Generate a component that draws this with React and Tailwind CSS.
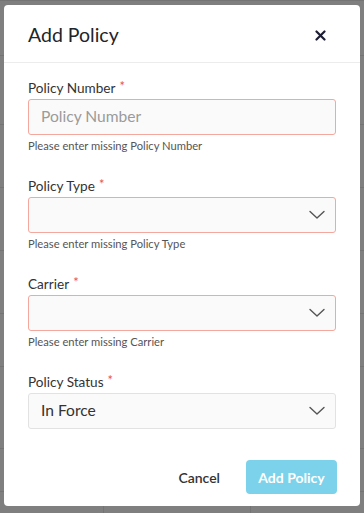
import React from 'react';

function Chevron() {
  return (
    <svg width="16" height="10" viewBox="0 0 16 10" fill="none" className="shrink-0">
      <path d="M1 1.5 L8 8 L15 1.5" stroke="#555" strokeWidth="1.4" strokeLinecap="round" strokeLinejoin="round" />
    </svg>
  );
}

function Label({ children }) {
  return (
    <div className="h-[20px] flex items-center text-[13.6px] text-[#333]">
      {children}
      <span className="text-[#e8574a] ml-[4px] text-[13px] -mt-[3px]">*</span>
    </div>
  );
}

function Field({ label, error, select, value, placeholder }) {
  const border = error ? 'border-[#f4a79d]' : 'border-[#e2e2e2]';
  return (
    <div>
      <Label>{label}</Label>
      <div className={`mt-[1px] h-[36px] rounded-[3px] border ${border} bg-[#fafafa] flex items-center justify-between pl-[12px] pr-[10px]`}>
        {value ? (
          <span className="text-[15.6px] text-[#333]">{value}</span>
        ) : (
          <span className="text-[15.6px] text-[#9b9b9b]">{placeholder}</span>
        )}
        {select && <Chevron />}
      </div>
      {error && <div className="mt-[3px] h-[16px] flex items-center text-[11.2px] text-[#555]">{error}</div>}
    </div>
  );
}

export default function App() {
  const rows = [0, 55, 124, 187, 250, 313, 366, 448, 491];
  return (
    <div className="relative w-[364px] h-[513px] bg-[#7f7f7f] overflow-hidden" style={{ fontFamily: 'Lato, "Open Sans", sans-serif' }}>
      {rows.map((y) => (
        <div key={y} className="absolute left-0 right-0 h-px bg-[#747474]" style={{ top: y }} />
      ))}
      <div className="absolute top-[506px] bottom-0 left-[103px] w-px bg-[#747474]" />
      <div className="absolute top-[506px] bottom-0 left-[250px] w-px bg-[#747474]" />

      <div className="absolute left-[4px] top-[5px] w-[356px] h-[501px] bg-white rounded-[4px] flex flex-col">
        <div className="h-[58px] px-[24px] flex items-center justify-between border-b border-[#ececec]">
          <h2 className="text-[19.5px] font-normal text-[#212529] pt-[3px]">Add Policy</h2>
          <button className="w-[20px] h-[20px] flex items-center justify-center mr-[6px] pt-[3px]">
            <svg width="11" height="11" viewBox="0 0 11 11">
              <path d="M1.5 1.5 L9.5 9.5 M9.5 1.5 L1.5 9.5" stroke="#1c1d33" strokeWidth="2.2" strokeLinecap="round" />
            </svg>
          </button>
        </div>

        <div className="px-[24px] pt-[15px] flex flex-col gap-[22px]">
          <Field label="Policy Number" placeholder="Policy Number" error="Please enter missing Policy Number" />
          <Field label="Policy Type" select error="Please enter missing Policy Type" />
          <Field label="Carrier" select error="Please enter missing Carrier" />
          <Field label="Policy Status" select value="In Force" />
        </div>

        <div className="mt-auto px-[23px] pb-[12px] flex justify-end items-center gap-[14px]">
          <button className="h-[34px] px-[12px] text-[14px] font-semibold text-[#333]">Cancel</button>
          <button className="h-[34px] w-[91px] rounded-[4px] bg-[#7bd2ea] text-white text-[14px] font-bold">Add Policy</button>
        </div>
      </div>
    </div>
  );
}
